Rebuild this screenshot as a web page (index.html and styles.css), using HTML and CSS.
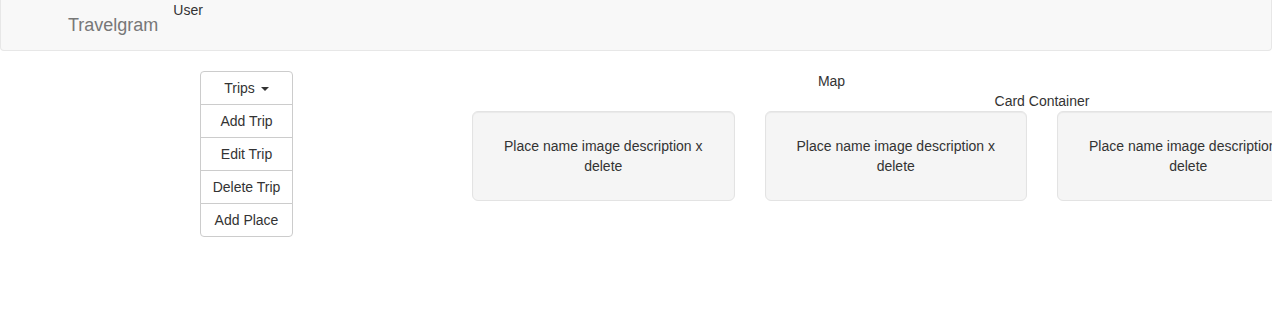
FILE: index.html
```html
<!DOCTYPE html>
<html>
<head>
<title>Travelgram</title>
<link rel="stylesheet" href="styles.css">
</head>
<body>
<div class="page">
  <nav class="navbar">
    <a class="brand" href="#">Travelgram</a>
    <div class="user">User</div>
  </nav>

  <div class="main">
    <div class="btn-group">
      <button class="btn">Trips <span class="caret"></span></button>
      <button class="btn">Add Trip</button>
      <button class="btn">Edit Trip</button>
      <button class="btn">Delete Trip</button>
      <button class="btn">Add Place</button>
    </div>

    <div class="content">
      <div class="map">Map</div>
      <div class="card-container">
        <div class="label">Card Container</div>
        <div class="cards">
          <div class="well">Place name image description x delete</div>
          <div class="well">Place name image description x delete</div>
          <div class="well">Place name image description x delete</div>
          <div class="well">Place name image description x delete</div>
        </div>
      </div>
    </div>
  </div>
</div>
</body>
</html>
```

FILE: styles.css
```css
body {
  margin: 0;
  font-family: "Liberation Sans", Arial, sans-serif;
  font-size: 14px;
  line-height: 20px;
  color: #333;
  background: #fff;
}

.page {
  width: 100%;
  overflow: hidden;
}

/* top bar */
.navbar {
  display: flex;
  align-items: flex-start;
  min-height: 50px;
  background-color: #f8f8f8;
  border: 1px solid #e7e7e7;
  border-top: none;
  border-radius: 0 0 4px 4px;
  margin-bottom: 20px;
}

.brand {
  padding: 15px 15px 15px 67px;
  font-size: 18px;
  line-height: 20px;
  color: #777;
  text-decoration: none;
}

.user {
  line-height: 20px;
}

/* main area */
.main {
  display: flex;
  align-items: flex-start;
  padding-left: 200px;
}

.btn-group {
  display: flex;
  flex-direction: column;
  width: 93px;
  flex: none;
}

.btn {
  display: block;
  padding: 6px 0;
  margin: 0;
  font-family: inherit;
  font-size: 14px;
  line-height: 20px;
  color: #333;
  background: #fff;
  border: 1px solid #ccc;
  text-align: center;
}

.btn + .btn {
  margin-top: -1px;
}

.btn:first-child {
  border-radius: 4px 4px 0 0;
}

.btn:last-child {
  border-radius: 0 0 4px 4px;
}

.caret {
  display: inline-block;
  width: 0;
  height: 0;
  margin-left: 2px;
  vertical-align: middle;
  border-top: 4px solid;
  border-left: 4px solid transparent;
  border-right: 4px solid transparent;
}

.content {
  flex: none;
  width: 1170px;
  margin-left: 164px;
}

.map {
  width: 749px;
  text-align: center;
}

.label {
  text-align: center;
}

.cards {
  display: flex;
}

.well {
  flex: none;
  width: 262.5px;
  box-sizing: border-box;
  margin: 0 15px;
  padding: 24px;
  background-color: #f5f5f5;
  border: 1px solid #e3e3e3;
  border-radius: 6px;
  box-shadow: inset 0 1px 1px rgba(0, 0, 0, .05);
  text-align: center;
}

.cards .well:first-child {
  margin-left: 15px;
}
```
